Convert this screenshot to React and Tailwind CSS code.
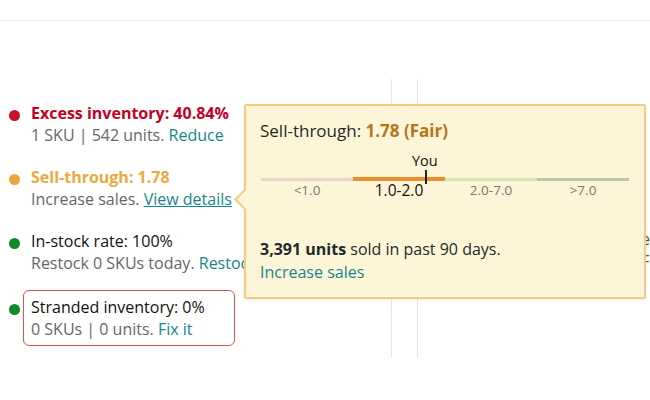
import React from 'react';

const font = { fontFamily: '"Open Sans", "Noto Sans", sans-serif' };

function Item({ dot, title, titleClass, children, boxed }) {
    return (
        <div className="flex items-start">
            <span className={`mt-[8px] w-[11px] h-[11px] rounded-full shrink-0 ${dot}`} />
            <div className={boxed ? 'ml-[3px] -mt-[6px] px-[7px] py-[5px] border border-[#d9534f] rounded-[6px] w-[212px]' : 'ml-[11px]'}>
                <div className={`text-[16px] leading-[22px] whitespace-nowrap ${titleClass}`}>{title}</div>
                <div className="text-[16px] leading-[22px] text-[#666] whitespace-nowrap">{children}</div>
            </div>
        </div>
    );
}

export default function App() {
    return (
        <div className="relative w-[650px] h-[400px] overflow-hidden bg-white" style={font}>
            <div className="h-[21px] border-b border-[#eeeeee]" />
            <div className="flex">
                <div className="w-[391px] shrink-0 pt-[81px] pl-[9px] flex flex-col gap-[20px]">
                    <Item dot="bg-[#c8102e]" title="Excess inventory: 40.84%" titleClass="font-bold text-[#c40024]">
                        1 SKU | 542 units. <span className="text-[#14878a]">Reduce</span>
                    </Item>
                    <Item dot="bg-[#eba53c]" title="Sell-through: 1.78" titleClass="font-bold text-[#eaa83e]">
                        Increase sales. <span className="text-[#14878a] underline">View details</span>
                    </Item>
                    <Item dot="bg-[#0f8a2a]" title="In-stock rate: 100%" titleClass="text-[#111]">
                        Restock 0 SKUs today. <span className="text-[#14878a]">Restock</span>
                    </Item>
                    <div className="mt-[2px]">
                        <Item dot="bg-[#0f8a2a]" title="Stranded inventory: 0%" titleClass="text-[#111]" boxed>
                            0 SKUs | 0 units. <span className="text-[#14878a]">Fix it</span>
                        </Item>
                    </div>
                </div>
                <div className="mt-[58px] h-[279px] w-[27px] shrink-0 border-l border-r border-[#e6e6e6]" />
                <div className="pt-[207px] pl-[223px] text-[16px] leading-[22px] text-[#555] whitespace-nowrap">
                    <div>e</div>
                    <div>F</div>
                </div>
            </div>

            {/* tooltip */}
            <div className="absolute left-[244px] top-[104px] w-[402px] h-[195px] bg-[#fdf5d8] border-2 border-[#f2cc80] rounded-[2px] shadow-[0_1px_3px_rgba(0,0,0,0.08)]">
                <div className="absolute -left-[9px] top-[86px] w-[15px] h-[15px] rotate-45 bg-[#fdf5d8] border-l-2 border-b-2 border-[#f2cc80]" />
                <div className="pl-[14px] pt-[14px] text-[17px] leading-[22px] text-[#1e2a2a]">
                    Sell-through: <span className="font-bold text-[#b8741c]">1.78 (Fair)</span>
                </div>
                <div className="relative mt-[8px] mx-[15px] h-[56px]">
                    <div className="absolute left-[151px] top-[1px] text-[14.5px] leading-[20px] text-[#111]">You</div>
                    <div className="absolute left-0 right-0 top-[27px] flex items-center h-[4px]">
                        <div className="flex-1 h-[3px] bg-[#ecd6cc]" />
                        <div className="flex-1 h-[4px] bg-[#ec8c2c]" />
                        <div className="flex-1 h-[3px] bg-[#d7e5b2]" />
                        <div className="flex-1 h-[3px] bg-[#b9c6aa]" />
                    </div>
                    <div className="absolute left-[164px] top-[20px] w-[2px] h-[14px] bg-[#222]" />
                    <div className="absolute left-0 right-0 top-[30px] flex text-center">
                        <div className="flex-1 text-[13.5px] leading-[20px] text-[#777]">&lt;1.0</div>
                        <div className="flex-1 text-[15.5px] leading-[20px] font-medium text-[#111]">1.0-2.0</div>
                        <div className="flex-1 text-[13.5px] leading-[20px] text-[#777]">2.0-7.0</div>
                        <div className="flex-1 text-[13.5px] leading-[20px] text-[#777]">&gt;7.0</div>
                    </div>
                </div>
                <div className="pl-[14px] pt-[32px] text-[16px] leading-[23px] text-[#1e2a2a]">
                    <span className="font-bold">3,391 units</span> sold in past 90 days.
                </div>
                <div className="pl-[14px] text-[16px] leading-[23px] text-[#14878a]">Increase sales</div>
            </div>
        </div>
    );
}
